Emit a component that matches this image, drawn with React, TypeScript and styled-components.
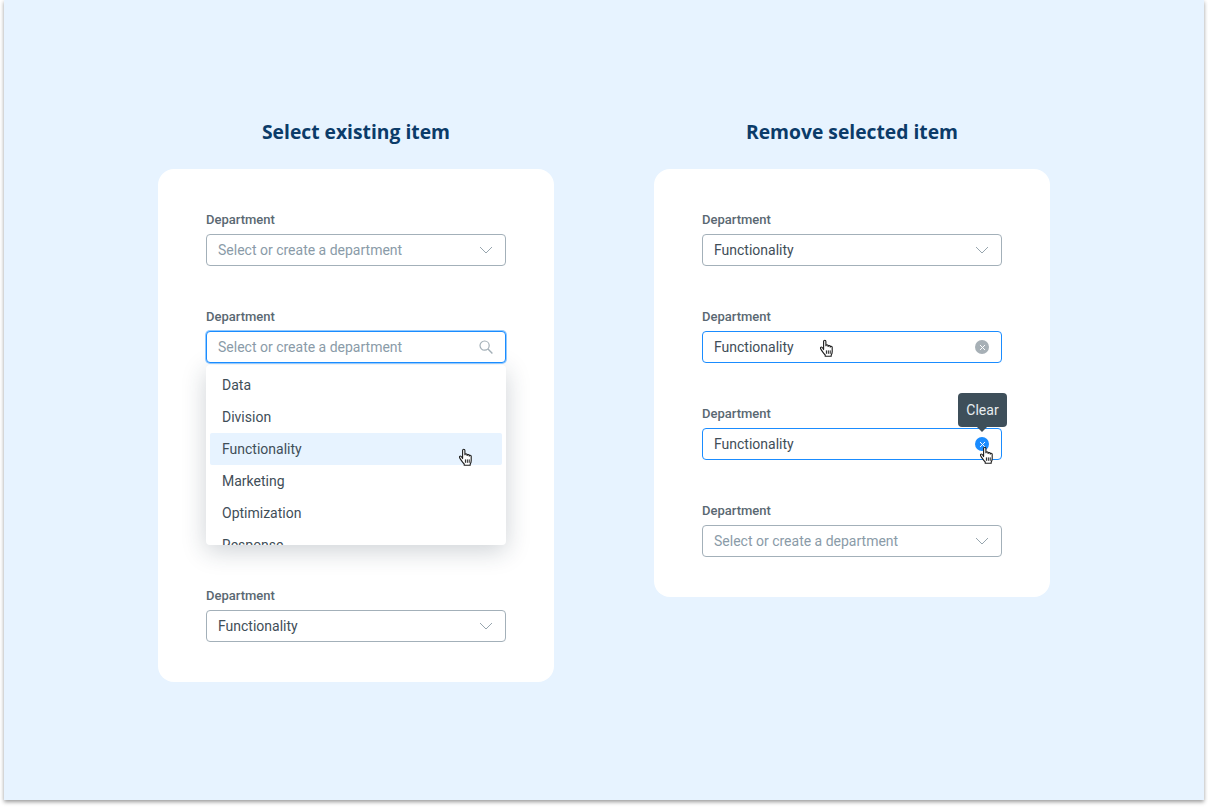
import React from "react";
import styled, { createGlobalStyle } from "styled-components";
import { X } from "lucide-react";

const GlobalStyle = createGlobalStyle`
  html, body {
    margin: 0;
    padding: 0;
    background: #fff;
  }
  body {
    font-family: Roboto, "Liberation Sans", sans-serif;
  }
`;

const HandCursor: React.FC = () => (
  <svg width="16" height="19" viewBox="0 0 16 19">
    <path
      d="M4.6 10.6V2.4c0-1.5 2.3-1.5 2.3 0v4.3c0-1.3 2.2-1.3 2.2 0v.7c0-1.2 2.1-1.2 2.1 0v.7c0-1.1 2-1.1 2 .2v4.4c0 1.6-.4 2.4-1 3.3v1.2H6.2v-1.2c-.9-.9-2.3-2.6-3.6-4.6-.9-1.4-1.6-2.5-.9-3.1.8-.7 1.9 0 2.9 2.3z"
      fill="#fff"
      stroke="#1c1c1c"
      strokeWidth="1.1"
      strokeLinejoin="round"
    />
    <path d="M7.4 11.4v3.4M9.3 11.4v3.4M11.2 11.4v3.4" stroke="#1c1c1c" strokeWidth="1" fill="none" />
  </svg>
);

const ChevronIcon: React.FC = () => (
  <svg width="14" height="8" viewBox="0 0 14 8">
    <path d="M1 1l6 6 6-6" fill="none" stroke="#97a5ae" strokeWidth="1" />
  </svg>
);

const SearchIcon: React.FC = () => (
  <svg width="14" height="14" viewBox="0 0 14 14">
    <circle cx="5.6" cy="5.6" r="4.6" fill="none" stroke="#a3afb7" strokeWidth="1.2" />
    <path d="M9 9l4.4 4.4" fill="none" stroke="#a3afb7" strokeWidth="1.4" />
  </svg>
);

type ControlState = "idle" | "focus" | "active";

interface FieldProps {
  value?: string;
  state?: ControlState;
  icon?: "chevron" | "search" | "clear" | "clearActive";
  cursor?: { left: number; top: number };
  tooltip?: string;
}

const Field: React.FC<FieldProps> = ({ value, state = "idle", icon = "chevron", cursor, tooltip }) => (
  <FieldWrapper>
    <Label>Department</Label>
    <Control $state={state}>
      <ControlText $placeholder={!value}>{value || "Select or create a department"}</ControlText>
      <IconSlot>
        {icon === "chevron" && <ChevronIcon />}
        {icon === "search" && <SearchIcon />}
        {(icon === "clear" || icon === "clearActive") && (
          <ClearBadge $active={icon === "clearActive"}>
            <X size={9} strokeWidth={2.6} color="#fff" />
          </ClearBadge>
        )}
      </IconSlot>
      {tooltip && <Tooltip>{tooltip}</Tooltip>}
      {cursor && (
        <CursorSpot $left={cursor.left} $top={cursor.top}>
          <HandCursor />
        </CursorSpot>
      )}
    </Control>
  </FieldWrapper>
);

const departments = ["Data", "Division", "Functionality", "Marketing", "Optimization", "Response"];

const App: React.FC = () => {
  return (
    <Page>
      <GlobalStyle />
      <Artboard>
        <Column>
          <Heading>Select existing item</Heading>
          <Card>
            <Field />
            <OpenField>
              <Field state="focus" icon="search" />
              <Menu>
                {departments.map((name) => (
                  <MenuItem key={name} $hovered={name === "Functionality"}>
                    {name}
                    {name === "Functionality" && (
                      <MenuCursor>
                        <HandCursor />
                      </MenuCursor>
                    )}
                  </MenuItem>
                ))}
              </Menu>
            </OpenField>
            <Field value="Functionality" />
          </Card>
        </Column>
        <Column>
          <Heading>Remove selected item</Heading>
          <Card>
            <Field value="Functionality" />
            <Field value="Functionality" state="active" icon="clear" cursor={{ left: 116, top: 7 }} />
            <Field
              value="Functionality"
              state="active"
              icon="clearActive"
              cursor={{ left: 276, top: 17 }}
              tooltip="Clear"
            />
            <Field />
          </Card>
        </Column>
      </Artboard>
    </Page>
  );
};

const Page = styled.div`
  width: 1208px;
  height: 808px;
  overflow: hidden;
  padding-left: 4px;
  box-sizing: border-box;
`;

const Artboard = styled.div`
  width: 1200px;
  height: 800px;
  background: #e7f3ff;
  box-shadow: 0 2px 4px rgba(0, 0, 0, 0.4);
  display: flex;
  justify-content: center;
  align-items: flex-start;
  gap: 100px;
  padding-top: 120px;
  box-sizing: border-box;
`;

const Column = styled.section`
  width: 396px;
  display: flex;
  flex-direction: column;
`;

const Heading = styled.h2`
  margin: 0 0 25px;
  height: 24px;
  line-height: 24px;
  text-align: center;
  font-family: "Open Sans", sans-serif;
  font-size: 19.3px;
  font-weight: 700;
  color: #0b3b69;
`;

const Card = styled.div`
  background: #fff;
  border-radius: 16px;
  padding: 43px 48px 40px;
  display: flex;
  flex-direction: column;
  gap: 43px;
`;

const FieldWrapper = styled.div`
  display: flex;
  flex-direction: column;
`;

const OpenField = styled.div`
  display: flex;
  flex-direction: column;
`;

const Label = styled.label`
  height: 16px;
  line-height: 16px;
  margin-bottom: 6px;
  font-size: 13px;
  font-weight: 500;
  color: #5a6872;
`;

const controlBorder = {
  idle: "1px solid #a3b0b9",
  focus: "1px solid #1a8cff",
  active: "1px solid #1a8cff",
};

const Control = styled.div<{ $state: ControlState }>`
  position: relative;
  height: 32px;
  box-sizing: border-box;
  padding: 0 11px;
  display: flex;
  align-items: center;
  justify-content: space-between;
  background: #fff;
  border-radius: 4px;
  border: ${({ $state }) => controlBorder[$state]};
  box-shadow: ${({ $state }) => ($state === "focus" ? "0 0 0 1px #93caff" : "none")};
`;

const ControlText = styled.span<{ $placeholder: boolean }>`
  font-size: 14px;
  color: ${({ $placeholder }) => ($placeholder ? "#8a9ba8" : "#3f4e58")};
`;

const IconSlot = styled.span`
  width: 20px;
  display: flex;
  align-items: center;
  justify-content: center;
  margin-right: -2px;
`;

const ClearBadge = styled.span<{ $active: boolean }>`
  width: 14px;
  height: 14px;
  border-radius: 50%;
  display: flex;
  align-items: center;
  justify-content: center;
  background: ${({ $active }) => ($active ? "#1a8cff" : "#a7b0b6")};
`;

const Tooltip = styled.div`
  position: absolute;
  right: -6px;
  bottom: 32px;
  width: 49px;
  height: 34px;
  border-radius: 4px;
  background: #3e4f5a;
  color: #e8edf0;
  font-size: 14px;
  line-height: 34px;
  text-align: center;

  &::after {
    content: "";
    position: absolute;
    left: 19px;
    top: 34px;
    border-left: 5px solid transparent;
    border-right: 5px solid transparent;
    border-top: 5px solid #3e4f5a;
  }
`;

const CursorSpot = styled.span<{ $left: number; $top: number }>`
  position: absolute;
  left: ${({ $left }) => $left}px;
  top: ${({ $top }) => $top}px;
  line-height: 0;
`;

const Menu = styled.div`
  margin-top: 2px;
  height: 180px;
  box-sizing: border-box;
  padding: 4px;
  overflow: hidden;
  background: #fff;
  border-radius: 4px;
  box-shadow: 0 6px 24px rgba(30, 50, 70, 0.22);
`;

const MenuItem = styled.div<{ $hovered: boolean }>`
  position: relative;
  height: 32px;
  line-height: 32px;
  padding-left: 12px;
  border-radius: 2px;
  font-size: 14px;
  color: #3f4e58;
  background: ${({ $hovered }) => ($hovered ? "#e7f3ff" : "transparent")};
`;

const MenuCursor = styled.span`
  position: absolute;
  left: 248px;
  top: 15px;
  line-height: 0;
`;

export default App;
